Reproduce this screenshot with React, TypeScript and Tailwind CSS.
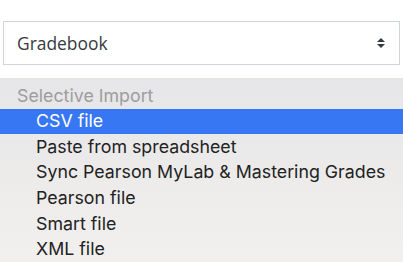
const ITEMS = [
  'CSV file',
  'Paste from spreadsheet',
  'Sync Pearson MyLab & Mastering Grades',
  'Pearson file',
  'Smart file',
  'XML file',
];

export default function App() {
  return (
    <div className="h-[266px] w-[403px] overflow-hidden bg-white">
      <div className="px-[3px] pt-[21px]">
        <div className="flex h-[44px] items-center justify-between border border-[#ced4da] bg-white pl-[13px] pr-[12px]">
          <span className="text-[17.4px] text-[#343a40] [font-family:'Open_Sans',sans-serif]">Gradebook</span>
          <svg width="8" height="10" viewBox="0 0 8 10" className="mr-[2px]">
            <path d="M4 0 L8 4 H0 Z" fill="#343a40" />
            <path d="M0 6 H8 L4 10 Z" fill="#343a40" />
          </svg>
        </div>
      </div>

      <div className="mt-[13px] h-[184px] bg-[linear-gradient(180deg,#e6e5e8_0%,#ecebea_50%,#f1f0ef_100%)] pt-[5px] [font-family:Inter,sans-serif]">
        <div className="flex h-[26px] items-center pl-[17px] text-[17.8px] text-[#9d9d9d]">Selective Import</div>
        {ITEMS.map((item, i) => (
          <div
            key={item}
            className={
              i === 0
                ? 'flex h-[25px] items-center bg-[#3877f3] pl-[36px] text-[17.8px] text-white'
                : 'flex h-[25.7px] items-center pl-[36px] text-[17.8px] text-[#222]'
            }
          >
            {item}
          </div>
        ))}
      </div>
    </div>
  );
}
